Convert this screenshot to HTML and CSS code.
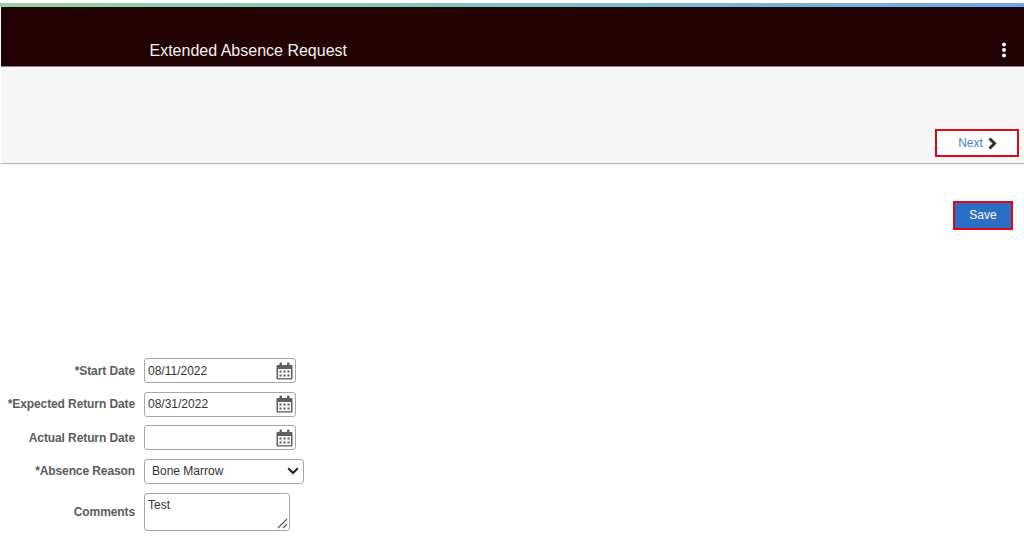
FILE: index.html
```html
<!DOCTYPE html>
<html lang="en">
<head>
<meta charset="utf-8">
<title>Extended Absence Request</title>
<link rel="stylesheet" href="styles.css">
</head>
<body>
<div class="accent"></div>
<header class="banner">
  <h1 class="title">Extended Absence Request</h1>
  <svg class="kebab" width="6" height="16" viewBox="0 0 6 16"><circle cx="3" cy="2.5" r="2" fill="#fff"/><circle cx="3" cy="8" r="2" fill="#fff"/><circle cx="3" cy="13.5" r="2" fill="#fff"/></svg>
</header>
<nav class="toolbar">
  <a class="next"><span>Next</span>
    <svg width="11" height="13" viewBox="0 0 11 13"><path d="M2.500 1.500 7.500 6.500l-5 5" fill="none" stroke="#333" stroke-width="3"/></svg>
  </a>
</nav>
<main class="content">
  <div class="actions"><button class="save">Save</button></div>
  <form class="form">
    <div class="row">
      <label class="label">*Start Date</label>
      <div class="field date"><span>08/11/2022</span><svg class="cal" width="17" height="18" viewBox="0 0 17 18"><use href="#cal"/></svg></div>
    </div>
    <div class="row">
      <label class="label">*Expected Return Date</label>
      <div class="field date"><span>08/31/2022</span><svg class="cal" width="17" height="18" viewBox="0 0 17 18"><use href="#cal"/></svg></div>
    </div>
    <div class="row">
      <label class="label">Actual Return Date</label>
      <div class="field date"><span></span><svg class="cal" width="17" height="18" viewBox="0 0 17 18"><use href="#cal"/></svg></div>
    </div>
    <div class="row">
      <label class="label">*Absence Reason</label>
      <div class="field select"><span>Bone Marrow</span>
        <svg width="12" height="8" viewBox="0 0 12 8"><path d="M1.200 1.200 6 6l4.800-4.800" fill="none" stroke="#222" stroke-width="2"/></svg>
      </div>
    </div>
    <div class="row comments">
      <label class="label">Comments</label>
      <div class="field area"><span>Test</span>
        <svg class="grip" width="11" height="11" viewBox="0 0 11 11"><path d="M1 10 10 1M6 10l4-4" stroke="#555" stroke-width="1.100" fill="none"/></svg>
      </div>
    </div>
  </form>
</main>
<svg class="defs" width="0" height="0">
  <symbol id="cal" viewBox="0 0 17 18">
    <path d="M1.500 3h14a1 1 0 0 1 1 1v12.500a1 1 0 0 1-1 1h-14a1 1 0 0 1-1-1V4a1 1 0 0 1 1-1Z" fill="#5f5f5f"/>
    <rect x="2" y="7" width="13" height="9.200" fill="#f8f8f8"/>
    <rect x="3.500" y="0.500" width="2.500" height="4" rx="1" fill="#5f5f5f"/>
    <rect x="11" y="0.500" width="2.500" height="4" rx="1" fill="#5f5f5f"/>
    <path d="M3.500 8.500h2v2h-2zM7.500 8.500h2v2h-2zM11.500 8.500h2v2h-2zM3.500 12.500h2v2h-2zM7.500 12.500h2v2h-2zM11.500 12.500h2v2h-2z" fill="#5f5f5f"/>
  </symbol>
</svg>
</body>
</html>
```
FILE: styles.css
```css
* { box-sizing: border-box; }
html, body { margin: 0; padding: 0; }
body {
  width: 1024px;
  height: 546px;
  overflow: hidden;
  background: #fff;
  font-family: "Liberation Sans", Arial, sans-serif;
  font-size: 12px;
  color: #333;
}
.accent {
  height: 7px;
  border-top: 3px solid #fff;
  background: linear-gradient(90deg, #9ad0a4 0%, #86c3bb 40%, #6aa8ea 100%);
}
.banner {
  height: 60px;
  margin-left: 1px;
  background: #230204;
  border-bottom: 1px solid #8d8080;
  display: flex;
  align-items: flex-end;
  justify-content: space-between;
  padding: 0 17px 5px 148.500px;
}
.title {
  margin: 0;
  font-size: 16px;
  font-weight: 400;
  line-height: 20px;
  color: #f2f2f2;
}
.kebab { margin-bottom: 3px; }
.toolbar {
  height: 97px;
  margin-left: 1px;
  background: #f7f7f7;
  border-bottom: 1px solid #b4b4b4;
  display: flex;
  align-items: flex-end;
  justify-content: flex-end;
  padding: 0 5px 6px 0;
}
.next {
  width: 84px;
  height: 28px;
  background: #fff;
  border: 2px solid #e30613;
  display: flex;
  align-items: center;
  justify-content: center;
  gap: 4px;
  color: #4a7fd0;
  padding-left: 2px;
}
.actions {
  display: flex;
  justify-content: flex-end;
  padding: 37px 11px 0 0;
}
.save {
  width: 60px;
  height: 29px;
  background: #2a6fc6;
  color: #fff;
  border: 2px solid #e30613;
  font: inherit;
  padding: 0 0 2px;
}
.form {
  display: flex;
  flex-direction: column;
  gap: 8.500px;
  margin-top: 128.200px;
}
.row {
  display: flex;
  align-items: center;
  gap: 9px;
  height: 25px;
}
.row.comments { height: 38px; margin-top: 0.800px; }
.label {
  width: 135px;
  text-align: right;
  letter-spacing: -0.100px;
  font-weight: 700;
  color: #5c5c5c;
  white-space: nowrap;
}
.field {
  background: #fff;
  border: 1px solid #a3a8ad;
  border-radius: 3px;
  height: 25px;
  display: flex;
  align-items: center;
  color: #333;
  position: relative;
  letter-spacing: 0;
}
.date {
  width: 152px;
  padding: 0 1px 0 3px;
  justify-content: space-between;
}
.cal { margin-right: 1px; }
.select {
  width: 160px;
  padding: 0 4px 0 7px;
  justify-content: space-between;
}
.area {
  width: 146px;
  height: 38px;
  align-items: flex-start;
  padding: 4px 3px;
}
.grip { position: absolute; right: 1px; bottom: 1px; }
.defs { position: absolute; }
```
